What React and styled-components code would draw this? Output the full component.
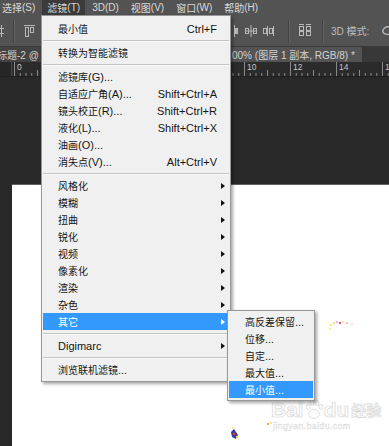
import React from "react";
import styled, { createGlobalStyle } from "styled-components";

const Global = createGlobalStyle`
  html, body { margin: 0; padding: 0; background: #282828; }
  body {
    width: 389px; height: 446px; overflow: hidden;
    font-family: "Liberation Sans", "Noto Sans CJK SC", sans-serif;
  }
`;

const Screen = styled.div`
  position: relative;
  width: 389px;
  height: 446px;
  display: flex;
  flex-direction: column;
  overflow: hidden;
  background: #282828;
`;

/* ---------- mixed-script text ---------- */
const Zh = styled.span`
  font-family: "Noto Sans CJK SC", sans-serif;
  font-size: ${(p) => p.$size || 10}px;
`;
const CJK_SPLIT = /([\u3000-\u9fff\uff00-\uffef]+)/;
const CJK_TEST = /[\u3000-\u9fff\uff00-\uffef]/;
function Mixed({ text, size }) {
  return text.split(CJK_SPLIT).map((s, i) =>
    CJK_TEST.test(s) ? (
      <Zh key={i} $size={size}>
        {s}
      </Zh>
    ) : (
      <React.Fragment key={i}>{s}</React.Fragment>
    )
  );
}

/* ---------- menu bar ---------- */
const MenuBar = styled.div`
  height: 15px;
  flex: none;
  display: flex;
  gap: 2px;
  margin-left: -3px;
  background: #535353;
  color: #dadada;
  font-size: 10px;
  white-space: nowrap;
`;
const MenuBarItem = styled.div`
  display: flex;
  align-items: center;
  padding: 0 5px;
  background: ${(p) => (p.$active ? "#3b3b3b" : "transparent")};
`;

/* ---------- options bar ---------- */
const OptionsBar = styled.div`
  height: 32px;
  flex: none;
  box-sizing: border-box;
  display: flex;
  align-items: center;
  background: #535353;
  border-bottom: 1px solid #3a3a3a;
  overflow: hidden;
  white-space: nowrap;
`;
const Slot = styled.div`
  flex: none;
  display: flex;
  align-items: center;
  margin-left: ${(p) => p.$ml || 0}px;
`;
const VSep = styled.div`
  flex: none;
  width: 2px;
  height: 22px;
  margin-left: ${(p) => p.$ml || 0}px;
  background: linear-gradient(to right, #424242 50%, #636363 50%);
`;
const OptLabel = styled.span`
  color: #bdbdbd;
  font-size: 10px;
  margin-left: ${(p) => p.$ml || 0}px;
`;

/* ---------- tabs ---------- */
const TabBar = styled.div`
  height: 15px;
  flex: none;
  display: flex;
  background: #383838;
  overflow: hidden;
`;
const Tab = styled.div`
  flex: none;
  width: ${(p) => p.$w}px;
  display: flex;
  align-items: center;
  gap: 8px;
  background: ${(p) => (p.$active ? "#535353" : "#434343")};
  color: #d2d2d2;
  font-size: 10px;
  white-space: nowrap;
  overflow: hidden;
`;
const TabText = styled.span`
  margin-left: ${(p) => p.$ml || 0}px;
`;
const Close = styled.span`
  font-size: 9px;
  color: #cfcfcf;
`;

/* ---------- ruler / workspace ---------- */
const RulerRow = styled.div`
  height: 14px;
  flex: none;
  background: #2b2b2b;
  border-bottom: 1px solid #1e1e1e;
`;
const Workspace = styled.div`
  flex: 1;
  display: flex;
  padding: 107px 0 0 12px;
  background: #282828;
`;
const Doc = styled.div`
  flex: 1;
  position: relative;
  background: #ffffff;
  border-top: 1px solid #616161;
`;

/* ---------- menus ---------- */
const Menu = styled.div`
  position: absolute;
  left: ${(p) => p.$x}px;
  top: ${(p) => p.$y}px;
  width: ${(p) => p.$w}px;
  box-sizing: border-box;
  padding: ${(p) => p.$pad};
  background: #f0f0f0;
  border: 1px solid #979797;
  box-shadow: 2px 2px 3px rgba(0, 0, 0, 0.35);
  color: #151515;
  font-size: 11px;
  white-space: nowrap;
`;
const Item = styled.div`
  height: 17px;
  display: flex;
  align-items: center;
  padding: 0 4px 0 ${(p) => p.$pl}px;
  background: ${(p) => (p.$hl ? "#3399ff" : "transparent")};
  color: ${(p) => (p.$hl ? "#ffffff" : "inherit")};
`;
const Label = styled.span`
  flex: 1;
`;
const Shortcut = styled.span``;
const ArrowSlot = styled.span`
  flex: none;
  width: 8px;
  display: flex;
  justify-content: flex-end;
`;
const Arrow = styled.span`
  width: 0;
  height: 0;
  border-top: 3.5px solid transparent;
  border-bottom: 3.5px solid transparent;
  border-left: 4px solid ${(p) => (p.$hl ? "#ffffff" : "#111111")};
`;
const Sep = styled.div`
  height: 7px;
  display: flex;
  align-items: center;
  &::before {
    content: "";
    flex: 1;
    height: 1px;
    background: #c4c4c4;
    box-shadow: 0 1px 0 #fbfbfb;
  }
`;

/* ---------- watermark ---------- */
const Watermark = styled.div`
  position: absolute;
  left: 259px;
  top: 214px;
  display: flex;
  flex-direction: column;
  align-items: flex-start;
  color: #fbfbfb;
  -webkit-text-stroke: 0.7px #d9d9d9;
`;
const WmTop = styled.div`
  display: flex;
  align-items: flex-end;
  font-family: "Liberation Sans", sans-serif;
  font-weight: bold;
  font-size: 21px;
  line-height: 22px;
`;
const WmZh = styled.span`
  font-family: "Noto Sans CJK SC", sans-serif;
  font-size: 15px;
  margin-left: 2px;
`;
const WmUrl = styled.div`
  font-family: "Liberation Sans", sans-serif;
  font-size: 9px;
  margin-left: 2px;
  -webkit-text-stroke: 0.4px #d9d9d9;
  letter-spacing: 0.3px;
`;
const Splat = styled.svg`
  position: absolute;
  left: 0;
  top: 0;
  pointer-events: none;
`;

/* ---------- icons ---------- */
const ICON = "#b9b9b9";
function ToolIcon({ kind }) {
  if (kind === "partialLeft")
    return (
      <svg width="5" height="12" viewBox="0 0 5 12">
        <rect x="1" y="0" width="1" height="12" fill={ICON} />
        <rect x="0" y="3" width="4" height="1" fill={ICON} />
        <rect x="0" y="8" width="4" height="1" fill={ICON} />
      </svg>
    );
  if (kind === "alignTop")
    return (
      <svg width="11" height="12" viewBox="0 0 11 12">
        <rect x="0" y="0" width="11" height="1" fill={ICON} />
        <rect x="1.5" y="2.5" width="3" height="9" fill="none" stroke={ICON} />
        <rect x="6.5" y="2.5" width="3" height="5" fill="none" stroke={ICON} />
      </svg>
    );
  if (kind === "partialRight")
    return (
      <svg width="7" height="12" viewBox="0 0 7 12">
        <rect x="3" y="0" width="1" height="12" fill={ICON} />
        <rect x="4" y="3" width="3" height="6" fill={ICON} />
      </svg>
    );
  if (kind === "distCenter")
    return (
      <svg width="12" height="12" viewBox="0 0 12 12">
        <rect x="0.5" y="3.5" width="3" height="5" fill="none" stroke={ICON} />
        <rect x="5.5" y="0" width="1" height="12" fill={ICON} />
        <rect x="8.5" y="3.5" width="3" height="5" fill="none" stroke={ICON} />
        <rect x="0" y="5.5" width="12" height="1" fill={ICON} />
      </svg>
    );
  if (kind === "distRight")
    return (
      <svg width="12" height="12" viewBox="0 0 12 12">
        <rect x="0.5" y="3.5" width="3" height="5" fill="none" stroke={ICON} />
        <rect x="4" y="1" width="1" height="10" fill={ICON} />
        <rect x="6.5" y="3.5" width="3" height="5" fill="none" stroke={ICON} />
        <rect x="10" y="1" width="1" height="10" fill={ICON} />
      </svg>
    );
  if (kind === "autoAlign")
    return (
      <svg width="12" height="13" viewBox="0 0 12 13">
        <rect x="0" y="0" width="5" height="1" fill={ICON} />
        <rect x="7" y="0" width="5" height="1" fill={ICON} />
        <rect x="0.5" y="2.5" width="4" height="4" fill="none" stroke={ICON} />
        <rect x="0.5" y="7.5" width="4" height="4" fill="none" stroke={ICON} />
        <rect x="7.5" y="2.5" width="4" height="4" fill="none" stroke={ICON} />
        <rect x="7.5" y="7.5" width="4" height="4" fill="none" stroke={ICON} />
      </svg>
    );
  if (kind === "rotate3d")
    return (
      <svg width="12" height="12" viewBox="0 0 12 12">
        <path d="M9 2 C5 1 1 4 2 7 C3 10 8 10 10 8" fill="none" stroke={ICON} strokeWidth="1.4" />
        <path d="M8 6 L11 8 L8 10 Z" fill={ICON} />
      </svg>
    );
  return null;
}

function Ruler() {
  const origin = 14;
  const unit = 23;
  const ticks = [];
  const labels = [];
  for (let q = -4; q <= 17 * 4; q++) {
    const x = origin + (q * unit) / 4 + 0.5;
    if (x < 12 || x > 389) continue;
    const major = q % 8 === 0;
    const mid = q % 4 === 0;
    const h = major ? 14 : mid ? 6 : 3;
    ticks.push(<line key={q} x1={x} x2={x} y1={14 - h} y2={14} stroke="#8a8a8a" strokeWidth="1" />);
    if (major && q >= 0)
      labels.push(
        <text key={"l" + q} x={x + 2.5} y={8} fill="#c4c4c4" fontSize="8.5" fontFamily="Liberation Sans, sans-serif">
          {q / 4}
        </text>
      );
  }
  return (
    <svg width="389" height="14" viewBox="0 0 389 14">
      <rect x="0" y="0" width="12" height="14" fill="#262626" />
      <line x1="11.5" x2="11.5" y1="0" y2="14" stroke="#4a4a4a" />
      {ticks}
      {labels}
    </svg>
  );
}

/* ---------- data ---------- */
const TOP_MENU = ["选择(S)", "滤镜(T)", "3D(D)", "视图(V)", "窗口(W)", "帮助(H)"];

const FILTER_MENU = [
  { t: "最小值", k: "Ctrl+F" },
  "sep",
  { t: "转换为智能滤镜" },
  "sep",
  { t: "滤镜库(G)..." },
  { t: "自适应广角(A)...", k: "Shift+Ctrl+A" },
  { t: "镜头校正(R)...", k: "Shift+Ctrl+R" },
  { t: "液化(L)...", k: "Shift+Ctrl+X" },
  { t: "油画(O)..." },
  { t: "消失点(V)...", k: "Alt+Ctrl+V" },
  "sep",
  { t: "风格化", sub: true },
  { t: "模糊", sub: true },
  { t: "扭曲", sub: true },
  { t: "锐化", sub: true },
  { t: "视频", sub: true },
  { t: "像素化", sub: true },
  { t: "渲染", sub: true },
  { t: "杂色", sub: true },
  { t: "其它", sub: true, hl: true },
  "sep",
  { t: "Digimarc", sub: true },
  "sep",
  { t: "浏览联机滤镜..." },
];

const OTHER_MENU = [
  { t: "高反差保留..." },
  { t: "位移..." },
  { t: "自定..." },
  { t: "最大值..." },
  { t: "最小值...", hl: true },
];

export default function App() {
  return (
    <>
      <Global />
      <Screen>
        <MenuBar>
          {TOP_MENU.map((m) => (
            <MenuBarItem key={m} $active={m === "滤镜(T)"}>
              <Mixed text={m} />
            </MenuBarItem>
          ))}
        </MenuBar>

        <OptionsBar>
          <Slot>
            <ToolIcon kind="partialLeft" />
          </Slot>
          <VSep $ml={8} />
          <Slot $ml={9}>
            <ToolIcon kind="alignTop" />
          </Slot>
          <Slot $ml={196}>
            <ToolIcon kind="partialRight" />
          </Slot>
          <Slot $ml={7}>
            <ToolIcon kind="distCenter" />
          </Slot>
          <Slot $ml={6}>
            <ToolIcon kind="distRight" />
          </Slot>
          <VSep $ml={13} />
          <Slot $ml={9}>
            <ToolIcon kind="autoAlign" />
          </Slot>
          <VSep $ml={11} />
          <OptLabel $ml={7}>
            <Mixed text="3D 模式:" />
          </OptLabel>
          <Slot $ml={12}>
            <ToolIcon kind="rotate3d" />
          </Slot>
        </OptionsBar>

        <TabBar>
          <Tab $w={231}>
            <TabText $ml={-3}>
              <Mixed text="标题-2 @ 66.7% (RGB/8)" />
            </TabText>
          </Tab>
          <Tab $w={131} $active>
            <TabText $ml={1}>
              <Mixed text="00% (图层 1 副本, RGB/8) *" />
            </TabText>
            <Close>×</Close>
          </Tab>
        </TabBar>

        <RulerRow>
          <Ruler />
        </RulerRow>

        <Workspace>
          <Doc>
            <Splat width="377" height="262" viewBox="0 0 377 262">
              <circle cx="319" cy="140" r="1" fill="#ffe24a" />
              <circle cx="322" cy="138" r="1" fill="#ffd84a" />
              <circle cx="325" cy="137" r="1" fill="#ff8fd0" />
              <circle cx="328" cy="138" r="1.2" fill="#e84ab8" />
              <circle cx="331" cy="137" r="0.9" fill="#ffe24a" />
              <circle cx="335" cy="138" r="0.9" fill="#ff9b9b" />
              <circle cx="340" cy="139" r="0.8" fill="#ffb0b0" />
              <circle cx="318" cy="144" r="0.9" fill="#ffe84a" />
              <circle cx="256" cy="239" r="0.9" fill="#ff6a3a" />
              <circle cx="259" cy="238" r="0.9" fill="#ffd23a" />
              <circle cx="333" cy="240" r="0.8" fill="#ffb0b0" />
              <path d="M219 247 l3 -3 l4 6 l-2 4 l-4 -2 z" fill="#2a3aa0" />
              <circle cx="222" cy="249" r="1.4" fill="#e23a2a" />
              <circle cx="225" cy="252" r="1.2" fill="#ffd23a" />
              <circle cx="221" cy="243" r="0.9" fill="#ffe84a" />
            </Splat>
            <Watermark>
              <WmTop>
                Bai
                <svg width="20" height="22" viewBox="0 0 20 22">
                  <g fill="#fbfbfb" stroke="#d9d9d9" strokeWidth="0.8">
                    <ellipse cx="10" cy="15" rx="5.5" ry="4.5" />
                    <ellipse cx="4" cy="8" rx="2" ry="2.6" />
                    <ellipse cx="8" cy="4" rx="2" ry="2.6" />
                    <ellipse cx="13" cy="4" rx="2" ry="2.6" />
                    <ellipse cx="17" cy="8" rx="2" ry="2.6" />
                  </g>
                </svg>
                du
                <WmZh>经验</WmZh>
              </WmTop>
              <WmUrl>jingyan.baidu.com</WmUrl>
            </Watermark>
          </Doc>
        </Workspace>

        <Menu $x={41} $y={15} $w={190} $pad="4px 1px 3px">
          {FILTER_MENU.map((it, i) =>
            it === "sep" ? (
              <Sep key={i} />
            ) : (
              <Item key={i} $pl={15} $hl={it.hl}>
                <Label>
                  <Mixed text={it.t} />
                </Label>
                {it.k && <Shortcut>{it.k}</Shortcut>}
                <ArrowSlot>{it.sub && <Arrow $hl={it.hl} />}</ArrowSlot>
              </Item>
            )
          )}
        </Menu>

        <Menu $x={227} $y={310} $w={88} $pad="2px 1px">
          {OTHER_MENU.map((it, i) => (
            <Item key={i} $pl={16} $hl={it.hl}>
              <Label>
                <Mixed text={it.t} />
              </Label>
            </Item>
          ))}
        </Menu>
      </Screen>
    </>
  );
}
